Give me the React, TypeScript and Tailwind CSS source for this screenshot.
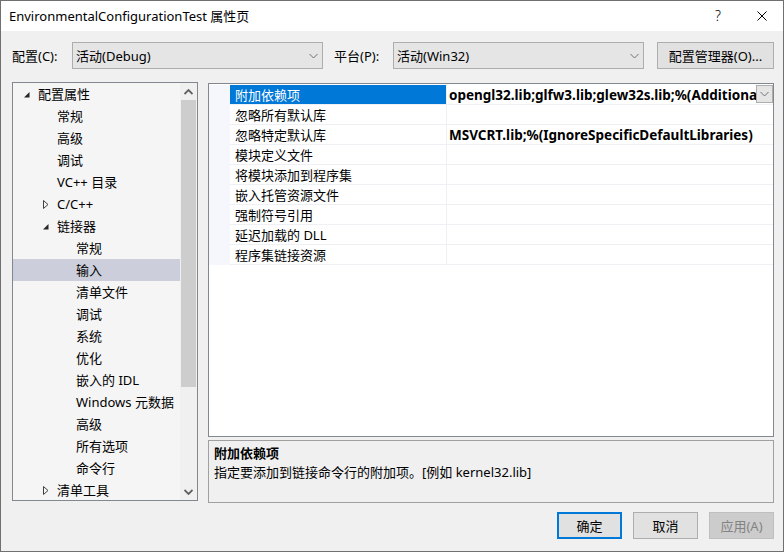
import type { ReactNode } from "react";

type TreeItem = {
  label: string;
  level: 1 | 2 | 3;
  toggle?: "open" | "closed";
  selected?: boolean;
};

const TREE: TreeItem[] = [
  { label: "配置属性", level: 1, toggle: "open" },
  { label: "常规", level: 2 },
  { label: "高级", level: 2 },
  { label: "调试", level: 2 },
  { label: "VC++ 目录", level: 2 },
  { label: "C/C++", level: 2, toggle: "closed" },
  { label: "链接器", level: 2, toggle: "open" },
  { label: "常规", level: 3 },
  { label: "输入", level: 3, selected: true },
  { label: "清单文件", level: 3 },
  { label: "调试", level: 3 },
  { label: "系统", level: 3 },
  { label: "优化", level: 3 },
  { label: "嵌入的 IDL", level: 3 },
  { label: "Windows 元数据", level: 3 },
  { label: "高级", level: 3 },
  { label: "所有选项", level: 3 },
  { label: "命令行", level: 3 },
  { label: "清单工具", level: 2, toggle: "closed" },
];

const PROPS: { name: string; value?: string; selected?: boolean }[] = [
  {
    name: "附加依赖项",
    value: "opengl32.lib;glfw3.lib;glew32s.lib;%(AdditionalDependencies)",
    selected: true,
  },
  { name: "忽略所有默认库" },
  { name: "忽略特定默认库", value: "MSVCRT.lib;%(IgnoreSpecificDefaultLibraries)" },
  { name: "模块定义文件" },
  { name: "将模块添加到程序集" },
  { name: "嵌入托管资源文件" },
  { name: "强制符号引用" },
  { name: "延迟加载的 DLL" },
  { name: "程序集链接资源" },
];

function Chevron({ up = false, bold = false }: { up?: boolean; bold?: boolean }) {
  return (
    <svg width="9" height="6" viewBox="0 0 9 6" aria-hidden="true">
      <polyline
        points={up ? "0.5,5 4.5,1 8.5,5" : "0.5,1 4.5,5 8.5,1"}
        fill="none"
        stroke={bold ? "#606060" : "#707070"}
        strokeWidth={bold ? 1.8 : 1}
      />
    </svg>
  );
}

function Toggle({ kind }: { kind?: TreeItem["toggle"] }) {
  if (kind === "open") {
    return (
      <svg width="6" height="6" viewBox="0 0 6 6" className="mt-[1px]" aria-hidden="true">
        <polygon points="5.5,0 5.5,5.5 0,5.5" fill="#262626" />
      </svg>
    );
  }
  if (kind === "closed") {
    return (
      <svg width="6" height="9" viewBox="0 0 6 9" aria-hidden="true">
        <polygon points="0.5,0.5 5,4.5 0.5,8.5" fill="none" stroke="#404040" />
      </svg>
    );
  }
  return null;
}

function ComboBox({ text }: { text: string }) {
  return (
    <div className="flex h-[27px] w-[251px] items-center justify-between border border-[#adadad] bg-[#e5e5e5] pl-[3px] pr-[4px]">
      <span>{text}</span>
      <Chevron />
    </div>
  );
}

function Button({ children, kind = "normal" }: { children: ReactNode; kind?: "default" | "normal" | "disabled" }) {
  return (
    <div
      className={
        kind === "default"
          ? "flex h-[27px] w-[65px] items-center justify-center border-2 border-[#0078d7] bg-[#e1e1e1]"
          : kind === "disabled"
            ? "flex h-[27px] w-[65px] items-center justify-center border border-[#bfbfbf] bg-[#cccccc] text-[#838383]"
            : "flex h-[27px] w-[65px] items-center justify-center border border-[#adadad] bg-[#e1e1e1]"
      }
    >
      {children}
    </div>
  );
}

const PAD: Record<TreeItem["level"], string> = {
  1: "pl-[11px]",
  2: "pl-[30px]",
  3: "pl-[49px]",
};

function Tree() {
  return (
    <div className="flex h-[419px] w-[186px] border border-[#828790] bg-[#f5f5f5]">
      <div className="flex-1 overflow-hidden">
        {TREE.map((item, i) => (
          <div
            // biome-ignore lint/suspicious/noArrayIndexKey: static list
            key={i}
            className={`flex h-[22px] items-center whitespace-nowrap ${PAD[item.level]} ${
              item.selected ? "bg-[#cccedb]" : ""
            }`}
          >
            <span className="flex w-[14px] items-center">
              <Toggle kind={item.toggle} />
            </span>
            <span>{item.label}</span>
          </div>
        ))}
      </div>
      <div className="flex w-[17px] flex-col bg-[#f0f0f0]">
        <div className="flex h-[17px] items-center justify-center">
          <Chevron up bold />
        </div>
        <div className="flex-1">
          <div className="mx-auto h-[287px] w-[15px] bg-[#cdcdcd]" />
        </div>
        <div className="flex h-[17px] items-center justify-center">
          <Chevron bold />
        </div>
      </div>
    </div>
  );
}

function PropertyGrid() {
  return (
    <div className="h-[354px] w-[566px] border border-[#828790] bg-white pt-[1px]">
      {PROPS.map((p) => (
        <div key={p.name} className="flex h-[20px]">
          <div className="w-[21px] bg-[#f5f7fc]" />
          <div className="w-[217px] border-b border-r border-[#eef0f4]">
            <div
              className={`flex h-full w-[216px] items-center pl-[5px] ${
                p.selected ? "bg-[#0078d7] text-white" : ""
              }`}
            >
              {p.name}
            </div>
          </div>
          <div className="flex min-w-0 flex-1 items-center border-b border-[#eef0f4]">
            <span className="min-w-0 flex-1 overflow-hidden whitespace-nowrap pl-[2px] text-[13.5px] font-bold">
              {p.value}
            </span>
            {p.selected && (
              <span className="flex h-[18px] w-[17px] items-center justify-center self-start border border-[#adadad] bg-[#e5e5e5]">
                <Chevron />
              </span>
            )}
          </div>
        </div>
      ))}
    </div>
  );
}

export default function App() {
  return (
    <div className="flex h-[552px] w-[784px] flex-col border border-[#707070] bg-[#f0f0f0] font-['Noto_Sans','Noto_Sans_CJK_SC',sans-serif] text-[13px] leading-[18px] text-black">
      <div className="flex h-[30px] items-center bg-white pl-[8px] pr-[16px]">
        <span className="flex-1">EnvironmentalConfigurationTest 属性页</span>
        <span className="mr-[36px] text-[14px] font-light">?</span>
        <svg width="10" height="10" viewBox="0 0 10 10" aria-hidden="true">
          <path d="M0.5 0.5 L9.5 9.5 M9.5 0.5 L0.5 9.5" stroke="#000" strokeWidth="1" />
        </svg>
      </div>

      <div className="mt-[11px] flex h-[27px] items-center pl-[11px]">
        <span className="w-[60px]">配置(C):</span>
        <ComboBox text="活动(Debug)" />
        <span className="ml-[11px] w-[59px]">平台(P):</span>
        <ComboBox text="活动(Win32)" />
        <div className="ml-[13px] flex h-[27px] w-[117px] items-center justify-center border border-[#adadad] bg-[#e1e1e1]">
          配置管理器(O)...
        </div>
      </div>

      <div className="mt-[13px] flex items-start pl-[11px]">
        <Tree />
        <div className="ml-[10px] mt-[1px] flex flex-col">
          <PropertyGrid />
          <div className="mt-[3px] h-[63px] w-[566px] border border-[#a0a0a0] px-[5px] pt-[3px] leading-[19px]">
            <div className="font-bold">附加依赖项</div>
            <div>指定要添加到链接命令行的附加项。[例如 kernel32.lib]</div>
          </div>
        </div>
      </div>

      <div className="mt-[9px] flex justify-end gap-[11px] pr-[9px]">
        <Button kind="default">确定</Button>
        <Button>取消</Button>
        <Button kind="disabled">应用(A)</Button>
      </div>
    </div>
  );
}
